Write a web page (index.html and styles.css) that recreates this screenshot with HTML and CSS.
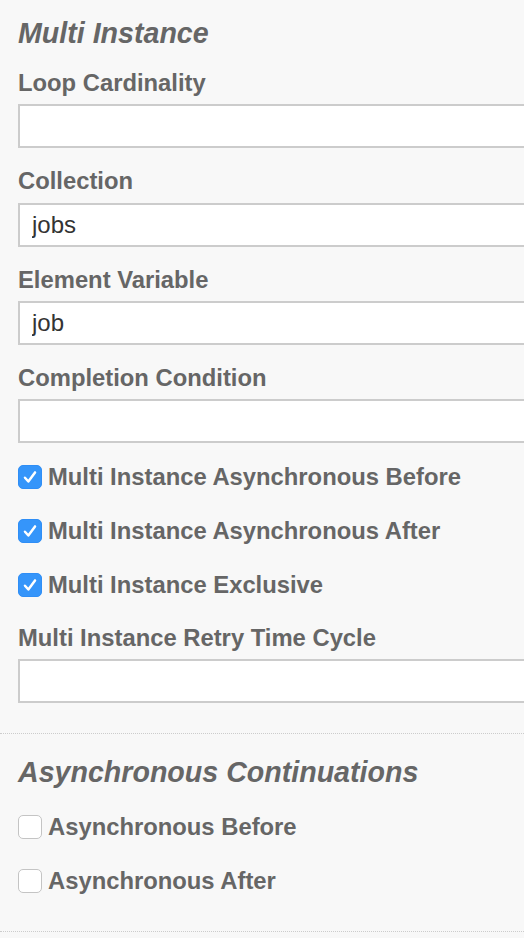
FILE: index.html
```html
<!DOCTYPE html>
<html lang="en">

<head>
    <meta charset="UTF-8">
    <meta name="viewport" content="width=device-width, initial-scale=1.0">
    <title>Properties</title>
    <link rel="stylesheet" href="styles.css">
</head>

<body>
    <div class="panel">
        <div class="group">
            <h2 class="group-title">Multi Instance</h2>

            <div class="field">
                <label for="loopCardinality">Loop Cardinality</label>
                <input type="text" id="loopCardinality" value="">
            </div>
            <div class="field">
                <label for="collection">Collection</label>
                <input type="text" id="collection" value="jobs">
            </div>
            <div class="field">
                <label for="elementVariable">Element Variable</label>
                <input type="text" id="elementVariable" value="job">
            </div>
            <div class="field">
                <label for="completionCondition">Completion Condition</label>
                <input type="text" id="completionCondition" value="">
            </div>

            <div class="checkbox">
                <input type="checkbox" id="miAsyncBefore" checked>
                <label for="miAsyncBefore">Multi Instance Asynchronous Before</label>
            </div>
            <div class="checkbox">
                <input type="checkbox" id="miAsyncAfter" checked>
                <label for="miAsyncAfter">Multi Instance Asynchronous After</label>
            </div>
            <div class="checkbox">
                <input type="checkbox" id="miExclusive" checked>
                <label for="miExclusive">Multi Instance Exclusive</label>
            </div>

            <div class="field">
                <label for="retryTimeCycle">Multi Instance Retry Time Cycle</label>
                <input type="text" id="retryTimeCycle" value="">
            </div>
        </div>

        <div class="group">
            <h2 class="group-title">Asynchronous Continuations</h2>

            <div class="checkbox">
                <input type="checkbox" id="asyncBefore">
                <label for="asyncBefore">Asynchronous Before</label>
            </div>
            <div class="checkbox">
                <input type="checkbox" id="asyncAfter">
                <label for="asyncAfter">Asynchronous After</label>
            </div>
        </div>
    </div>
</body>

</html>
```

FILE: styles.css
```css
*,
html {
    padding: 0;
    margin: 0;
    box-sizing: border-box;
}

html,
body {
    overflow: hidden;
}

body {
    background-color: #f8f8f8;
    font-family: "Liberation Sans", Arial, sans-serif;
    color: #666;
}

.group {
    padding: 20px 0 12px 18px;
    border-bottom: 1px dotted #ccc;
    overflow: hidden;
}

.group:first-child {
    padding-top: 15px;
}

.group-title {
    font-size: 28.6px;
    font-style: italic;
    font-weight: bold;
    line-height: 36px;
    margin-bottom: 17px;
}

/* checkbox right under a title sits a bit lower */
.group-title + .checkbox {
    margin-top: 21px;
}

.field {
    margin-bottom: 18px;
}

.field label {
    display: block;
    font-size: 23.8px;
    font-weight: bold;
    line-height: 30px;
    margin-bottom: 6.3px;
}

.field input {
    display: block;
    width: calc(100% + 40px);
    height: 44px;
    padding: 0 12px;
    border: 2px solid #ccc;
    border-radius: 0;
    background-color: #fff;
    font-family: "Liberation Sans", Arial, sans-serif;
    font-size: 24px;
    color: #333;
    outline: none;
}

.checkbox {
    display: flex;
    align-items: center;
    height: 32px;
    margin-bottom: 22px;
}

.checkbox label {
    font-size: 23.8px;
    font-weight: bold;
    margin-left: 6px;
}

.checkbox input {
    appearance: none;
    -webkit-appearance: none;
    width: 24px;
    height: 24px;
    border: 1px solid #c4c4c4;
    border-radius: 5px;
    background-color: #fff;
    flex-shrink: 0;
}

.checkbox input:checked {
    border-color: #2f8ef6;
    background-color: #3595fa;
    background-image: url("data:image/svg+xml;utf8,<svg xmlns='http://www.w3.org/2000/svg' viewBox='0 0 24 24'><path d='M6.5 12.8l3.7 4.1L17.5 7' fill='none' stroke='white' stroke-width='2.7' stroke-linecap='round' stroke-linejoin='round'/></svg>");
    background-repeat: no-repeat;
}
```
